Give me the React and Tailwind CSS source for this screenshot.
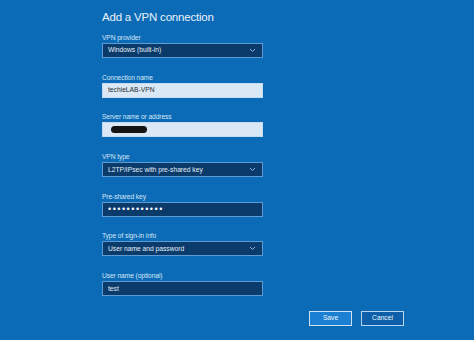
const fields = [
  { label: 'VPN provider', kind: 'select', value: 'Windows (built-in)' },
  { label: 'Connection name', kind: 'light', value: 'techieLAB-VPN' },
  { label: 'Server name or address', kind: 'redacted' },
  { label: 'VPN type', kind: 'select', value: 'L2TP/IPsec with pre-shared key' },
  { label: 'Pre-shared key', kind: 'password', value: '••••••••••••' },
  { label: 'Type of sign-in info', kind: 'select', value: 'User name and password' },
  { label: 'User name (optional)', kind: 'dark', value: 'test' },
];

function Chevron() {
  return (
    <svg width="7" height="5" viewBox="0 0 7 5" className="ml-auto mr-[6px]" aria-hidden="true">
      <polyline points="1,1 3.5,3.5 6,1" fill="none" stroke="#8db4da" strokeWidth="1" />
    </svg>
  );
}

function Field({ field }) {
  const dark = field.kind !== 'light' && field.kind !== 'redacted';
  return (
    <div className="mb-[14.7px]">
      <div className="h-[10px] text-[6.7px] leading-[10px] text-[#d4e6f6] tracking-[-0.1px]">
        {field.label}
      </div>
      <div
        className={
          dark
            ? 'flex h-[15px] items-center border border-[#5f9bd4] bg-[#0a3b6b] pl-[5px] text-[6.7px] text-[#e6eff8]'
            : 'flex h-[15px] items-center border border-[#c4dbf0] bg-[#dae8f5] pl-[5px] text-[6.7px] text-[#1e2a36]'
        }
      >
        {field.kind === 'redacted' ? (
          <span className="ml-[3px] h-[7px] w-[36px] rounded-full bg-[#141414] blur-[0.5px]" />
        ) : field.kind === 'password' ? (
          <span className="text-[9px] leading-none tracking-[1.5px] text-[#f6f9fc]">{field.value}</span>
        ) : (
          <span>{field.value}</span>
        )}
        {field.kind === 'select' && <Chevron />}
      </div>
    </div>
  );
}

export default function App() {
  return (
    <div
      className="relative h-[340px] w-[474px] overflow-hidden bg-[#0b6bb7]"
      style={{ fontFamily: '"Liberation Sans", Arial, sans-serif' }}
    >
      <div className="ml-[102px] w-[161px] pt-[10px]">
        <h1 className="mb-[9px] h-[14px] whitespace-nowrap text-[11.5px] font-normal leading-[14px] tracking-[-0.2px] text-[#eaf2fa]">
          Add a VPN connection
        </h1>
        {fields.map((f) => (
          <Field key={f.label} field={f} />
        ))}
      </div>
      <div className="mr-[70px] mt-[1px] flex justify-end gap-[9px]">
        <button className="flex h-[15px] w-[43px] items-center justify-center border border-[#cfe2f4] bg-[#1b7fd2] text-[6.7px] text-[#eef5fb]">
          Save
        </button>
        <button className="flex h-[15px] w-[43px] items-center justify-center border border-[#b9d4ee] bg-[#0c5fa8] text-[6.7px] text-[#eef5fb]">
          Cancel
        </button>
      </div>
    </div>
  );
}
